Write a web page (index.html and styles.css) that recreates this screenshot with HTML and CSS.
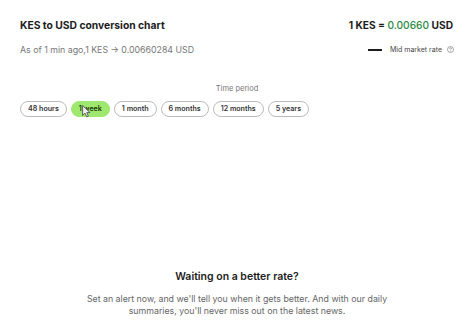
FILE: index.html
```html
<!DOCTYPE html>
<html lang="en">
<head>
    <meta charset="UTF-8">
    <meta name="viewport" content="width=device-width, initial-scale=1.0">
    <title>KES to USD conversion chart</title>
    <link rel="stylesheet" href="styles.css">
</head>
<body>
    <div class="chart-header">
        <div class="chart-info">
            <h1 class="chart-title">KES to USD conversion chart</h1>
            <div class="chart-sub">As of 1 min ago,1 KES &rarr; 0.00660284 USD</div>
        </div>
        <div class="chart-rate">
            <div class="rate-value">1 KES = <span class="rate-green">0.00660</span> USD</div>
            <div class="legend">
                <span class="legend-line"></span>
                <span class="legend-label">Mid market rate</span>
                <svg class="legend-help" width="7" height="7" viewBox="0 0 14 14">
                    <circle cx="7" cy="7" r="6" fill="none" stroke="#777" stroke-width="1.3"/>
                    <path d="M5.2 5.4a1.8 1.8 0 1 1 2.5 1.6c-.5.3-.7.6-.7 1.2" fill="none" stroke="#777" stroke-width="1.3"/>
                    <circle cx="7" cy="10.3" r=".8" fill="#777"/>
                </svg>
            </div>
        </div>
    </div>

    <div class="period">
        <div class="period-label">Time period</div>
        <div class="period-buttons">
            <button class="pill">48 hours</button>
            <button class="pill active">1 week
                <svg class="cursor" width="9" height="13" viewBox="0 0 9 13">
                    <path d="M0.6 0.6V10.4L3 8.2L4.7 11.9L6.4 11.2L4.8 7.6H8.1Z" fill="#eee" stroke="#444" stroke-width=".8" stroke-linejoin="round"/>
                </svg>
            </button>
            <button class="pill">1 month</button>
            <button class="pill">6 months</button>
            <button class="pill">12 months</button>
            <button class="pill">5 years</button>
        </div>
    </div>

    <div class="chart-area"></div>

    <div class="alert">
        <h2 class="alert-title">Waiting on a better rate?</h2>
        <p class="alert-text">Set an alert now, and we'll tell you when it gets better. And with our daily summaries, you'll never miss out on the latest news.</p>
    </div>
</body>
</html>
```

FILE: styles.css
```css
body {
    font-family: Inter, "Noto Sans", sans-serif;
    background-color: #ffffff;
    color: #1c1c1c;
    margin: 0;
    padding: 18px 20px 0 20px;
}

.chart-header {
    display: flex;
    justify-content: space-between;
    align-items: flex-start;
}

.chart-title {
    font-size: 10.3px;
    font-weight: 700;
    margin: 0;
    line-height: 15px;
}

.chart-sub {
    margin-top: 11px;
    font-size: 8.8px;
    color: #777;
    line-height: 12px;
}

.chart-rate {
    display: flex;
    flex-direction: column;
    align-items: flex-end;
}

.rate-value {
    font-size: 10.2px;
    font-weight: 700;
    line-height: 15px;
    margin-right: 1px;
}

.rate-green {
    color: #2f8a46;
    font-weight: 500;
}

.legend {
    display: flex;
    align-items: center;
    margin-top: 12px;
}

.legend-line {
    width: 14px;
    height: 2px;
    background-color: #1c1c1c;
    margin-right: 8px;
}

.legend-label {
    font-size: 7px;
    color: #444;
    margin-right: 5px;
}

.period {
    margin-top: 28px;
    text-align: center;
}

.period-label {
    font-size: 7.5px;
    color: #777;
    line-height: 10px;
}

.period-buttons {
    display: flex;
    gap: 4px;
    margin-top: 7px;
}

.pill {
    position: relative;
    height: 16px;
    padding: 0 7px;
    border: 1px solid #bbb;
    border-radius: 8px;
    background-color: #fff;
    font-family: inherit;
    font-size: 7.1px;
    font-weight: 600;
    color: #333;
    line-height: 14px;
    cursor: pointer;
}

.pill.active {
    background-color: #9fe870;
    border-color: #9fe870;
    color: #163300;
}

.cursor {
    position: absolute;
    left: 10px;
    top: 3px;
}

.chart-area {
    height: 153px;
}

.alert {
    text-align: center;
}

.alert-title {
    font-size: 10.5px;
    font-weight: 600;
    margin: 0;
    line-height: 14px;
}

.alert-text {
    margin: 9px auto 0;
    font-size: 8.8px;
    line-height: 12px;
    color: #666;
    max-width: 320px;
}
```
